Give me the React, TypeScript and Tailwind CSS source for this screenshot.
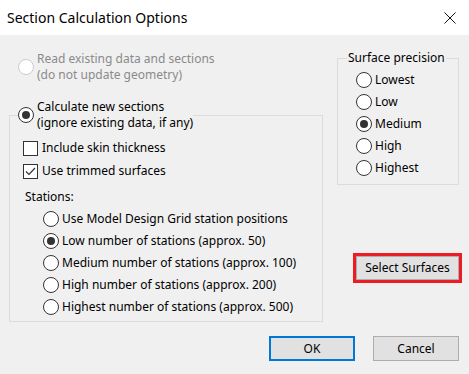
import { useState } from "react";

const Radio = ({ checked, disabled }: { checked?: boolean; disabled?: boolean }) => (
  <span
    className={`flex h-[16px] w-[16px] shrink-0 items-center justify-center rounded-full border bg-white ${
      disabled ? "border-[#cccccc]" : "border-[#333333]"
    }`}
  >
    {checked && <span className="h-[8px] w-[8px] rounded-full bg-[#333333]" />}
  </span>
);

const Check = ({ checked }: { checked?: boolean }) => (
  <span className="flex h-[15px] w-[15px] shrink-0 items-center justify-center border border-[#333333] bg-white">
    {checked && (
      <svg width="11" height="9" viewBox="0 0 11 9">
        <path d="M1 4.5 L4 7.5 L10 1" fill="none" stroke="#333333" strokeWidth="1.2" />
      </svg>
    )}
  </span>
);

const App = () => {
  const [stations, setStations] = useState(1);
  const [precision, setPrecision] = useState(2);

  const stationOpts = [
    "Use Model Design Grid station positions",
    "Low number of stations (approx. 50)",
    "Medium number of stations (approx. 100)",
    "High number of stations (approx. 200)",
    "Highest number of stations (approx. 500)",
  ];
  const precisionOpts = ["Lowest", "Low", "Medium", "High", "Highest"];

  return (
    <div
      className="h-[374px] w-[469px] overflow-hidden bg-[#f0f0f0] text-[12px] text-black"
      style={{ fontFamily: '"Noto Sans", "Liberation Sans", sans-serif' }}
    >
      {/* Title bar */}
      <div className="flex h-[35px] items-center justify-between bg-white pl-[7px] pr-[13px]">
        <span className="text-[14px]">Section Calculation Options</span>
        <svg width="12" height="12" viewBox="0 0 12 12">
          <path d="M0.5 0.5 L11.5 11.5 M11.5 0.5 L0.5 11.5" stroke="#111" strokeWidth="1" />
        </svg>
      </div>

      <div className="flex px-[9px] pt-[16px]">
        {/* Left column */}
        <div className="flex w-[314px] flex-col">
          <div className="flex items-center gap-[3px] pl-[9px] leading-[16px] text-[#8a8a8a]">
            <Radio disabled />
            <span>
              Read existing data and sections
              <br />
              (do not update geometry)
            </span>
          </div>

          <fieldset className="mt-[16px] h-[223px] border border-[#dcdcdc] pl-[13px]">
            <legend className="-ml-[5px] flex items-center gap-[3px] leading-[16px]">
              <Radio checked />
              <span>
                Calculate new sections
                <br />
                (ignore existing data, if any)
              </span>
            </legend>
            <div className="mt-[9px] flex items-center gap-[4px] leading-[16px]">
              <Check />
              <span>Include skin thickness</span>
            </div>
            <div className="mt-[7px] flex items-center gap-[4px] leading-[16px]">
              <Check checked />
              <span>Use trimmed surfaces</span>
            </div>
            <div className="mt-[10px] pl-[2px] leading-[16px]">Stations:</div>
            <div className="mt-[6px] flex flex-col gap-[6px] pl-[20px]">
              {stationOpts.map((s, i) => (
                <div key={s} className="flex items-center gap-[3px] leading-[16px]" onClick={() => setStations(i)}>
                  <Radio checked={stations === i} />
                  <span>{s}</span>
                </div>
              ))}
            </div>
          </fieldset>
        </div>

        {/* Right column */}
        <div className="ml-[14px] flex w-[122px] flex-col">
          <fieldset className="mt-[-1px] h-[135px] border border-[#dcdcdc] pl-[18px]">
            <legend className="ml-[-9px] px-[1px] leading-[16px]">Surface precision</legend>
            <div className="mt-[6px] flex flex-col gap-[6px]">
              {precisionOpts.map((p, i) => (
                <div key={p} className="flex items-center gap-[3px] leading-[16px]" onClick={() => setPrecision(i)}>
                  <Radio checked={precision === i} />
                  <span>{p}</span>
                </div>
              ))}
            </div>
          </fieldset>
          <div className="ml-[16px] mt-[68px] w-[109px] border-[3px] border-[#ed1c24]">
            <button className="flex h-[24px] w-full items-center justify-center border border-[#adadad] bg-[#e1e1e1]">
              Select Surfaces
            </button>
          </div>
        </div>
      </div>

      {/* Footer buttons */}
      <div className="mt-[14px] flex justify-end gap-[18px] pr-[10px]">
        <button className="h-[25px] w-[86px] border-2 border-[#0078d7] bg-[#e1e1e1]">OK</button>
        <button className="h-[25px] w-[86px] border border-[#adadad] bg-[#e1e1e1]">Cancel</button>
      </div>
    </div>
  );
};

export default App;
